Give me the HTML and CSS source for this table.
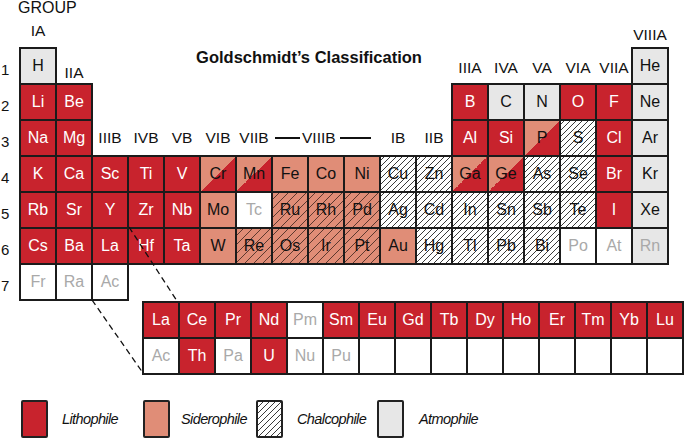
FILE: index.html
```html
<!DOCTYPE html>
<html>
<head>
<meta charset="utf-8">
<link rel="stylesheet" href="styles.css">
</head>
<body>
<div class="table">
  <div class="group-title">GROUP</div>
  <div class="glabel g1">IA</div>
  <div class="glabel g18">VIIIA</div>

  <div class="rl">1</div>
  <div class="cell at">H</div>
  <div class="glabel low">IIA</div>
  <div class="title">Goldschmidt’s Classification</div>
  <div class="glabel mid">IIIA</div>
  <div class="glabel mid">IVA</div>
  <div class="glabel mid">VA</div>
  <div class="glabel mid">VIA</div>
  <div class="glabel mid">VIIA</div>
  <div class="cell at">He</div>

  <div class="rl">2</div>
  <div class="cell li">Li</div>
  <div class="cell li">Be</div>
  <div class="cell li g13">B</div>
  <div class="cell at">C</div>
  <div class="cell at">N</div>
  <div class="cell li">O</div>
  <div class="cell li">F</div>
  <div class="cell at">Ne</div>

  <div class="rl">3</div>
  <div class="cell li">Na</div>
  <div class="cell li">Mg</div>
  <div class="glabel">IIIB</div>
  <div class="glabel">IVB</div>
  <div class="glabel">VB</div>
  <div class="glabel">VIB</div>
  <div class="glabel">VIIB</div>
  <div class="glabel viii"><span class="dash d1"></span>VIIIB<span class="dash d2"></span></div>
  <div class="glabel">IB</div>
  <div class="glabel">IIB</div>
  <div class="cell li">Al</div>
  <div class="cell li">Si</div>
  <div class="cell sp">P</div>
  <div class="cell ch">S</div>
  <div class="cell li">Cl</div>
  <div class="cell at">Ar</div>

  <div class="rl">4</div>
  <div class="cell li">K</div>
  <div class="cell li">Ca</div>
  <div class="cell li">Sc</div>
  <div class="cell li">Ti</div>
  <div class="cell li">V</div>
  <div class="cell sp">Cr</div>
  <div class="cell sp">Mn</div>
  <div class="cell si">Fe</div>
  <div class="cell si">Co</div>
  <div class="cell si">Ni</div>
  <div class="cell ch">Cu</div>
  <div class="cell ch">Zn</div>
  <div class="cell sp">Ga</div>
  <div class="cell sp">Ge</div>
  <div class="cell ch">As</div>
  <div class="cell ch">Se</div>
  <div class="cell li">Br</div>
  <div class="cell at">Kr</div>

  <div class="rl">5</div>
  <div class="cell li">Rb</div>
  <div class="cell li">Sr</div>
  <div class="cell li">Y</div>
  <div class="cell li">Zr</div>
  <div class="cell li">Nb</div>
  <div class="cell si">Mo</div>
  <div class="cell syn">Tc</div>
  <div class="cell sc">Ru</div>
  <div class="cell sc">Rh</div>
  <div class="cell sc">Pd</div>
  <div class="cell ch">Ag</div>
  <div class="cell ch">Cd</div>
  <div class="cell ch">In</div>
  <div class="cell ch">Sn</div>
  <div class="cell ch">Sb</div>
  <div class="cell ch">Te</div>
  <div class="cell li">I</div>
  <div class="cell at">Xe</div>

  <div class="rl">6</div>
  <div class="cell li">Cs</div>
  <div class="cell li">Ba</div>
  <div class="cell li">La</div>
  <div class="cell li">Hf</div>
  <div class="cell li">Ta</div>
  <div class="cell si">W</div>
  <div class="cell sc">Re</div>
  <div class="cell sc">Os</div>
  <div class="cell sc">Ir</div>
  <div class="cell sc">Pt</div>
  <div class="cell si">Au</div>
  <div class="cell ch">Hg</div>
  <div class="cell ch">Tl</div>
  <div class="cell ch">Pb</div>
  <div class="cell ch">Bi</div>
  <div class="cell syn">Po</div>
  <div class="cell syn">At</div>
  <div class="cell at syn">Rn</div>

  <div class="rl">7</div>
  <div class="cell syn">Fr</div>
  <div class="cell syn">Ra</div>
  <div class="cell syn">Ac</div>
</div>

<div class="series">
  <div class="cell li">La</div>
  <div class="cell li">Ce</div>
  <div class="cell li">Pr</div>
  <div class="cell li">Nd</div>
  <div class="cell syn">Pm</div>
  <div class="cell li">Sm</div>
  <div class="cell li">Eu</div>
  <div class="cell li">Gd</div>
  <div class="cell li">Tb</div>
  <div class="cell li">Dy</div>
  <div class="cell li">Ho</div>
  <div class="cell li">Er</div>
  <div class="cell li">Tm</div>
  <div class="cell li">Yb</div>
  <div class="cell li">Lu</div>

  <div class="cell syn">Ac</div>
  <div class="cell li">Th</div>
  <div class="cell syn">Pa</div>
  <div class="cell li">U</div>
  <div class="cell syn">Nu</div>
  <div class="cell syn">Pu</div>
  <div class="cell"></div>
  <div class="cell"></div>
  <div class="cell"></div>
  <div class="cell"></div>
  <div class="cell"></div>
  <div class="cell"></div>
  <div class="cell"></div>
  <div class="cell"></div>
  <div class="cell"></div>
</div>

<div class="legend">
  <div class="key k1"><span class="swatch li"></span><span class="key-label">Lithophile</span></div>
  <div class="key k2"><span class="swatch si"></span><span class="key-label">Siderophile</span></div>
  <div class="key k3"><span class="swatch ch"></span><span class="key-label">Chalcophile</span></div>
  <div class="key k4"><span class="swatch at"></span><span class="key-label">Atmophile</span></div>
</div>

<svg class="leaders" width="685" height="439" viewBox="0 0 685 439">
  <line x1="92" y1="300" x2="143" y2="373"/>
  <line x1="129" y1="227" x2="177" y2="301"/>
</svg>
</body>
</html>
```

FILE: styles.css
```css
* { box-sizing: border-box; }
html, body { margin: 0; padding: 0; background: #fff; }
body {
  width: 685px;
  height: 439px;
  overflow: hidden;
  position: relative;
  font-family: "Liberation Sans", Arial, sans-serif;
  color: #111;
}

.table {
  display: grid;
  grid-template-columns: 20px repeat(18, 36px);
  grid-template-rows: 16px 32px repeat(7, 36px);
}

.group-title {
  grid-column: 1 / span 5;
  font-size: 16px;
  line-height: 16px;
  padding-left: 18px;
}

.glabel {
  display: flex;
  align-items: center;
  justify-content: center;
  font-size: 15.5px;
  white-space: nowrap;
}
.g1 { grid-column-start: 2; padding-bottom: 2px; }
.g18 { grid-column-start: 19; padding-top: 6px; }
.g13 { grid-column-start: 14; }
.low { align-items: flex-end; padding-bottom: 2px; }
.mid { padding-top: 3px; }

.viii {
  grid-column: span 3;
  justify-content: flex-start;
  padding-left: 3px;
}
.dash {
  display: block;
  height: 2px;
  background: #111;
}
.d1 { width: 25px; margin-right: 2px; }
.d2 { width: 31px; margin-left: 4px; }

.title {
  grid-column: 6 / span 8;
  align-self: start;
  text-align: center;
  font-weight: bold;
  font-size: 16.5px;
  line-height: 18px;
  padding-left: 2px;
}

.rl {
  grid-column-start: 1;
  display: flex;
  align-items: center;
  font-size: 15px;
  padding-left: 1px;
  padding-top: 7px;
}

.cell {
  display: flex;
  align-items: center;
  justify-content: center;
  font-size: 16px;
  padding-bottom: 1px;
  background: #fff;
  outline: 2px solid #1b1b1b;
  outline-offset: -1px;
}

.li { background: #c8232d; color: #fff; }
.si { background: #e08d77; }
.at { background: #e7e7e7; }
.ch {
  background: repeating-linear-gradient(135deg, #fff 0 3.3px, #3a3a3a 3.3px 4.2px);
}
.sc {
  background: repeating-linear-gradient(135deg, #e08d77 0 5.4px, #5c382e 5.4px 6.3px);
}
.sp {
  background: linear-gradient(to bottom right, #e08d77 50%, #c8232d 50%);
  color: #111;
}
.syn { color: #a9a9a9; }

.series {
  display: grid;
  grid-template-columns: repeat(15, 36px);
  grid-template-rows: repeat(2, 36px);
  margin: 2px 0 0 143px;
  width: 540px;
}

.legend {
  display: flex;
  margin-top: 26px;
  padding-left: 21px;
  height: 38px;
}
.key {
  display: flex;
  align-items: center;
  gap: 14px;
}
.k1 { width: 122px; }
.k2 { width: 113px; gap: 11px; }
.k3 { width: 121px; }
.k4 { gap: 15px; }
.swatch {
  display: block;
  width: 27px;
  height: 38px;
  border: 2px solid #222;
  border-radius: 2px;
}
.key-label {
  font-style: italic;
  font-size: 14.5px;
  letter-spacing: -0.6px;
}

.leaders {
  position: absolute;
  left: 0;
  top: 0;
  pointer-events: none;
}
.leaders line {
  stroke: #111;
  stroke-width: 1.3;
  stroke-dasharray: 6 4;
}
```
